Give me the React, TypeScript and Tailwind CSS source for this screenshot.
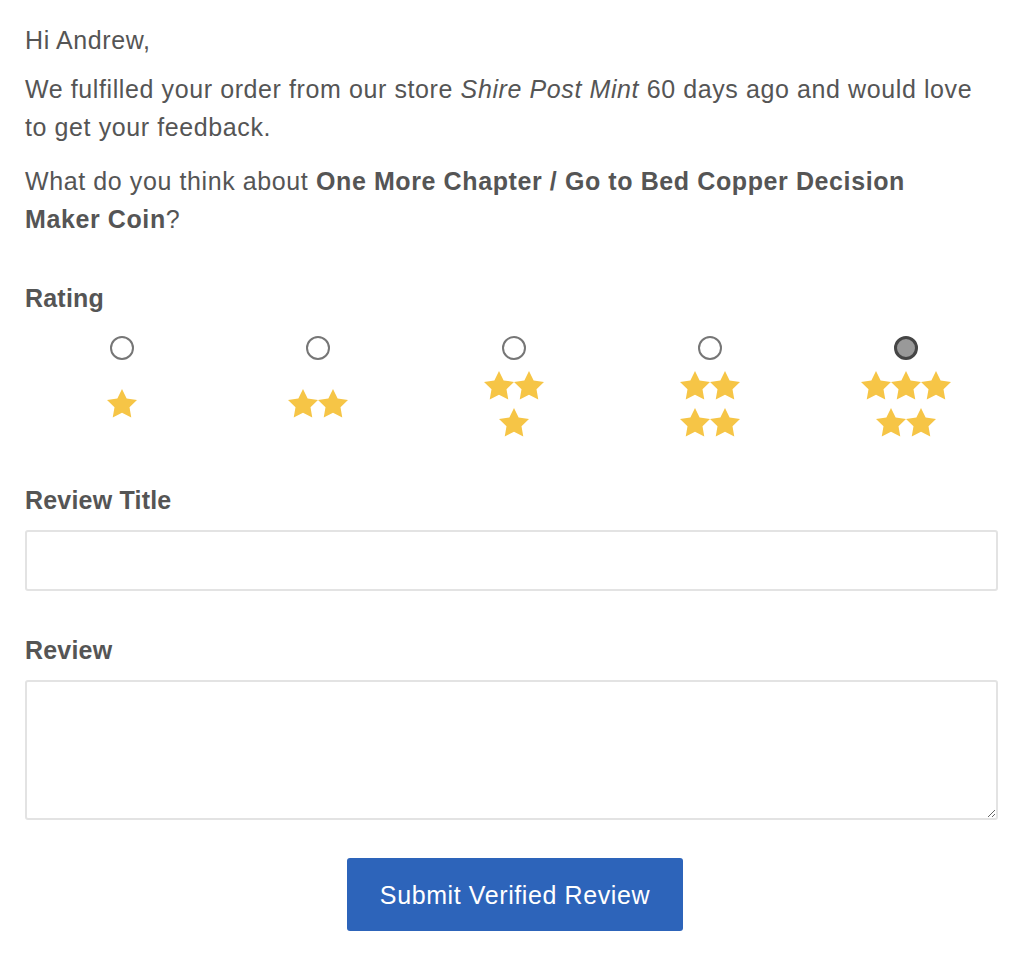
import React, { useState } from 'react';

const FONT = { fontFamily: '"Liberation Sans", Arial, Helvetica, sans-serif' };

function Star() {
  return (
    <svg width="30" height="30" viewBox="2 2 20 20" className="block">
      <path
        d="M12 2l3.09 6.26L22 9.27l-5 4.87 1.18 6.88L12 17.77l-6.18 3.25L7 14.14 2 9.27l6.91-1.01L12 2z"
        fill="#f6c546"
      />
    </svg>
  );
}

// star layout per rating, row by row
const STAR_ROWS: number[][] = [[1], [2], [2, 1], [2, 2], [3, 2]];

function Radio({ checked }: { checked: boolean }) {
  if (checked) {
    return (
      <span className="block w-[24px] h-[24px] rounded-full border-[3px] border-[#454545] bg-[#999]" />
    );
  }
  return <span className="block w-[24px] h-[24px] rounded-full border-2 border-[#767676] bg-white" />;
}

export default function App() {
  const [rating, setRating] = useState(5);

  return (
    <div
      className="min-h-screen bg-white text-[#555] text-[25px] tracking-[0.6px] leading-[38px] pl-[25px] pr-[32px] pt-[21px]"
      style={FONT}
    >
      <p className="mb-[11px]">Hi Andrew,</p>
      <p className="mb-[16px] max-w-[960px]">
        We fulfilled your order from our store <em>Shire Post Mint</em> 60 days ago and would love to get your
        feedback.
      </p>
      <p className="max-w-[960px]">
        What do you think about <strong>One More Chapter / Go to Bed Copper Decision Maker Coin</strong>?
      </p>

      <div className="mt-[41px] font-bold tracking-[0.2px]">Rating</div>
      <div className="grid grid-cols-5 w-[980px] -ml-[1px] mt-[19px]">
        {STAR_ROWS.map((rows, i) => (
          <button
            key={i}
            type="button"
            onClick={() => setRating(i + 1)}
            className="flex flex-col items-center cursor-pointer"
          >
            <Radio checked={rating === i + 1} />
            <div className="h-[76px] mt-[7px] flex flex-col justify-center gap-[7px] pb-[2px]">
              {rows.map((n, r) => (
                <div key={r} className="flex justify-center">
                  {Array.from({ length: n }).map((_, s) => (
                    <Star key={s} />
                  ))}
                </div>
              ))}
            </div>
          </button>
        ))}
      </div>

      <label className="block mt-[38px] font-bold tracking-[0.2px]">Review Title</label>
      <input
        type="text"
        className="block w-full h-[61px] mt-[11px] border-2 border-[#e3e3e3] rounded-[3px] px-3 outline-none"
      />

      <label className="block mt-[40px] font-bold tracking-[0.2px]">Review</label>
      <textarea className="block w-full h-[140px] mt-[11px] border-2 border-[#e3e3e3] rounded-[3px] px-3 py-2 outline-none" />

      <button
        type="button"
        className="block mt-[38px] ml-[322px] w-[336px] h-[73px] rounded-[3px] bg-[#2d64ba] text-white text-[25px] tracking-[0.6px]"
      >
        Submit Verified Review
      </button>
    </div>
  );
}
